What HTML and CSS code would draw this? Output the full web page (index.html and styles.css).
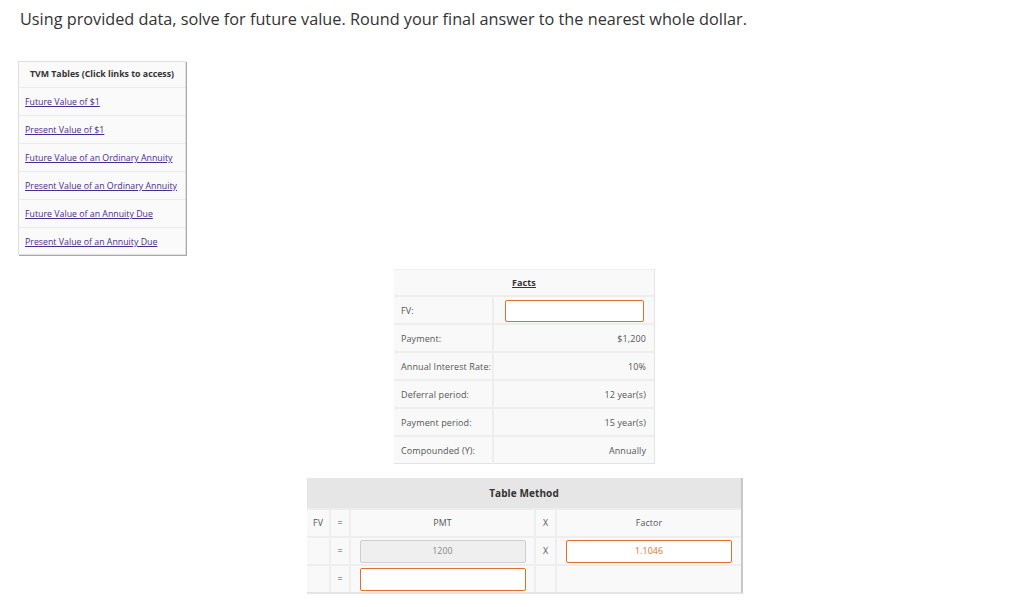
FILE: index.html
```html
<!DOCTYPE html>
<html>
<head>
<meta charset="utf-8">
<link rel="stylesheet" href="styles.css">
</head>
<body>
<p class="prompt">Using provided data, solve for future value. Round your final answer to the nearest whole dollar.</p>

<div class="tvm">
  <div class="tvm-head">TVM Tables (Click links to access)</div>
  <div class="tvm-row"><a href="#">Future Value of $1</a></div>
  <div class="tvm-row"><a href="#">Present Value of $1</a></div>
  <div class="tvm-row"><a href="#">Future Value of an Ordinary Annuity</a></div>
  <div class="tvm-row"><a href="#">Present Value of an Ordinary Annuity</a></div>
  <div class="tvm-row"><a href="#">Future Value of an Annuity Due</a></div>
  <div class="tvm-row"><a href="#">Present Value of an Annuity Due</a></div>
</div>

<div class="facts">
  <div class="facts-head"><span>Facts</span></div>
  <div class="f-row"><div class="f-label">FV:</div><div class="f-val"><div class="inp orange"></div></div></div>
  <div class="f-row"><div class="f-label">Payment:</div><div class="f-val">$1,200</div></div>
  <div class="f-row"><div class="f-label">Annual Interest Rate:</div><div class="f-val">10%</div></div>
  <div class="f-row"><div class="f-label">Deferral period:</div><div class="f-val">12 year(s)</div></div>
  <div class="f-row"><div class="f-label">Payment period:</div><div class="f-val">15 year(s)</div></div>
  <div class="f-row"><div class="f-label">Compounded (Y):</div><div class="f-val">Annually</div></div>
</div>

<div class="method">
  <div class="m-head">Table Method</div>
  <div class="m-row">
    <div class="c">FV</div><div class="c">=</div><div class="c">PMT</div><div class="c">X</div><div class="c">Factor</div>
  </div>
  <div class="m-row">
    <div class="c"></div><div class="c">=</div><div class="c"><div class="inp gray">1200</div></div><div class="c">X</div><div class="c"><div class="inp orange otext">1.1046</div></div>
  </div>
  <div class="m-row">
    <div class="c"></div><div class="c">=</div><div class="c"><div class="inp orange"></div></div><div class="c"></div><div class="c"></div>
  </div>
</div>
</body>
</html>
```

FILE: styles.css
```css
body {
  margin: 0;
  background: #fff;
  font-family: "Open Sans", "Liberation Sans", sans-serif;
  color: #555;
}
.prompt {
  margin: 8px 0 0 20px;
  font-size: 16.25px;
  line-height: 22px;
  color: #333;
}
.tvm {
  margin: 31px 0 0 18px;
  width: 166px;
  border: 1px solid #e0e0e0;
  box-shadow: 1px 1px 0 #a8a8a8;
  background: #fafafa;
}
.tvm-head {
  height: 25px;
  line-height: 24px;
  text-align: center;
  font-size: 8.8px;
  font-weight: 700;
  color: #333;
  border-bottom: 1px solid #ececec;
}
.tvm-row {
  height: 25px;
  padding-top: 2px;
  line-height: 25px;
  padding-left: 6px;
  font-size: 8.8px;
  border-bottom: 1px solid #ececec;
}
.tvm-row:last-child { border-bottom: none; height: 24px; }
.tvm-row a { color: #4b2c8c; text-decoration: underline; }

.facts {
  margin: 14px 0 0 394px;
  width: 260px;
  border-right: 1px solid #e4e4e4;
  border-bottom: 1px solid #e4e4e4;
  background: #f9f9f9;
  font-size: 9px;
  letter-spacing: 0.1px;
}
.facts-head {
  height: 25px;
  line-height: 25px;
  text-align: center;
  font-weight: 700;
  font-size: 9px;
  color: #333;
  border-top: 1px solid #efefef;
  border-bottom: 2px solid #eeeeee;
}
.facts-head span { text-decoration: underline; }
.f-row {
  display: grid;
  grid-template-columns: 100px 1fr;
  height: 26px;
  border-bottom: 2px solid #eeeeee;
}
.f-row:last-child { border-bottom: none; height: 26px; }
.f-label {
  padding-left: 7px;
  line-height: 27px;
  border-right: 2px solid #eeeeee;
}
.f-val {
  text-align: right;
  padding-right: 8px;
  line-height: 27px;
  display: flex;
  align-items: center;
  justify-content: flex-end;
}
.f-val .inp { width: 139px; height: 22px; margin-right: 2px; }

.inp {
  box-sizing: border-box;
  background: #fff;
  border-radius: 2px;
  text-align: center;
  font-size: 8.8px;
  line-height: 20px;
}
.orange { border: 1px solid #e06f2c; }
.otext { color: #e06f2c; }
.gray { background: #efefef; border: 1px solid #cfcfcf; color: #888; }

.method {
  margin: 14px 0 0 307px;
  width: 434px;
  border-right: 2px solid #c8c8c8;
  border-bottom: 2px solid #e4e4e4;
  background: #f9f9f9;
  font-size: 8.8px;
  letter-spacing: 0.1px;
}
.m-head {
  height: 30px;
  line-height: 30px;
  background: #e6e6e6;
  text-align: center;
  font-weight: 700;
  font-size: 10px;
  color: #333;
}
.m-row {
  display: grid;
  grid-template-columns: 24px 20px 185px 21px 1fr;
  height: 26px;
  border-top: 2px solid #eeeeee;
}
.m-row .c {
  border-right: 2px solid #eeeeee;
  text-align: center;
  line-height: 26px;
  display: flex;
  align-items: center;
  justify-content: center;
}
.m-row .c:last-child { border-right: none; }
.m-row .c .inp { height: 23px; line-height: 21px; }
.m-row .c:nth-child(3) .inp { width: 166px; }
.m-row .c:nth-child(5) .inp { width: 166px; }
```
